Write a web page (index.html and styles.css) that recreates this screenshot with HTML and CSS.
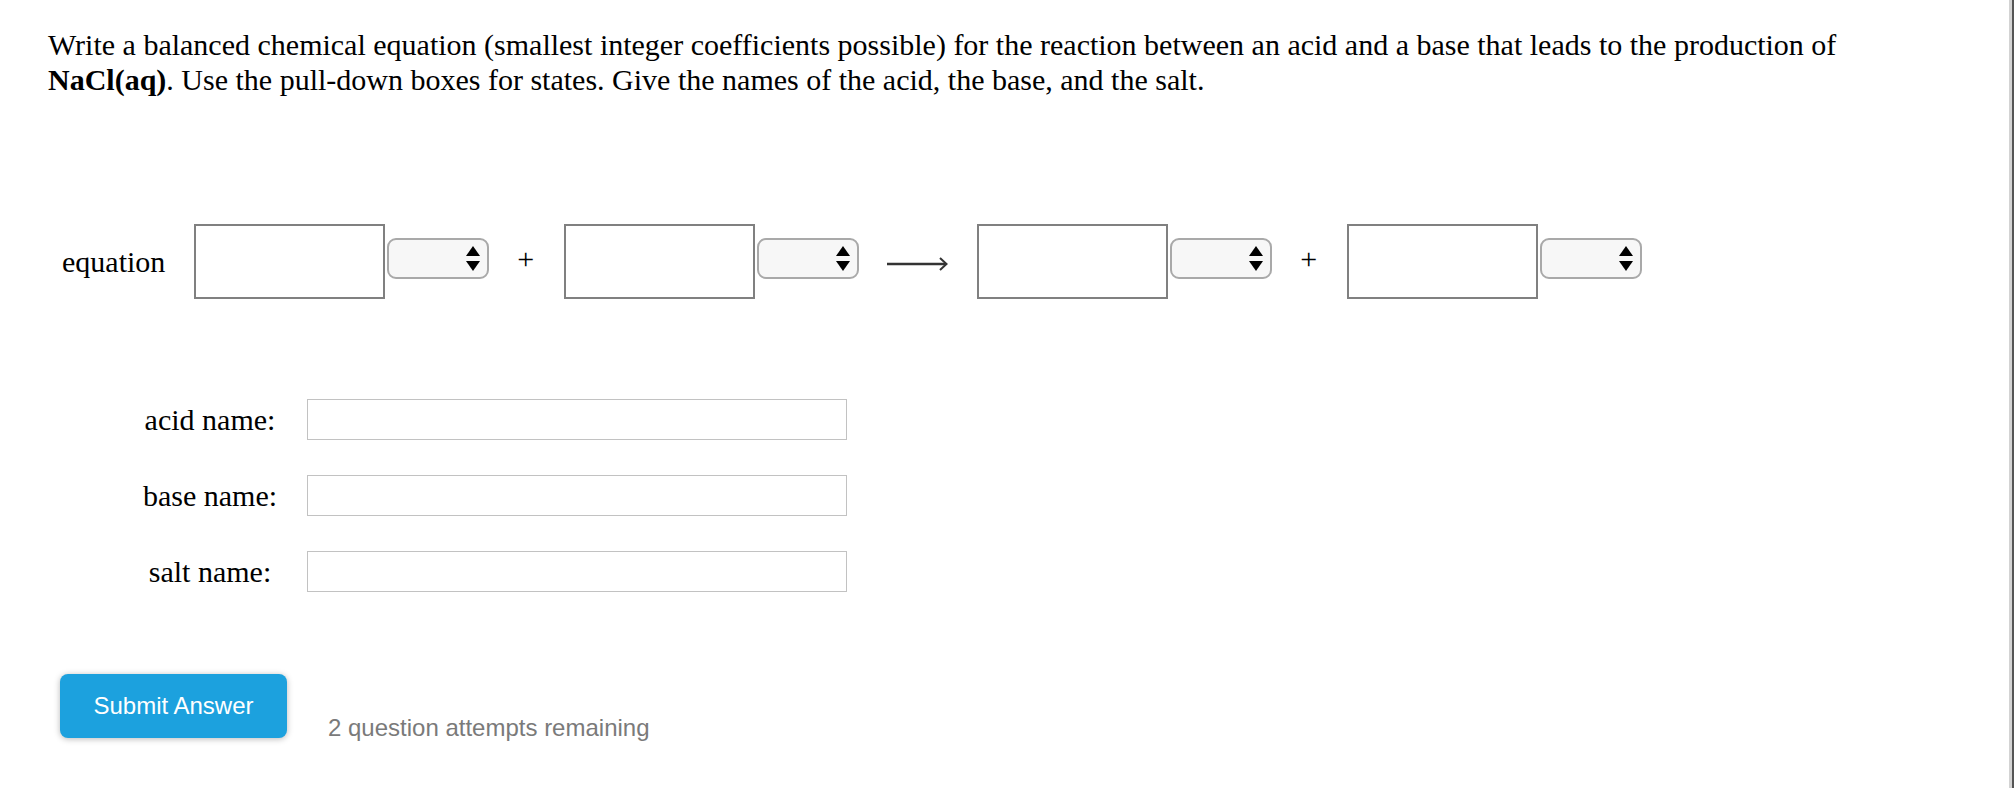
FILE: index.html
```html
<!DOCTYPE html>
<html lang="en">
<head>
<meta charset="utf-8">
<title>Question</title>
<link rel="stylesheet" href="styles.css">
</head>
<body>
<div class="frame">
  <p class="prompt">Write a balanced chemical equation (smallest integer coefficients possible) for the reaction between an acid and a base that leads to the production of <b>NaCl(aq)</b>. Use the pull-down boxes for states. Give the names of the acid, the base, and the salt.</p>

  <div class="equation-row">
    <span class="eq-label">equation</span>
    <div class="formula-box"></div>
    <div class="state-select"><svg class="updown" width="14" height="25" viewBox="0 0 14 25"><polygon points="7,0 14,10 0,10" fill="#000"/><polygon points="0,15 14,15 7,25" fill="#000"/></svg></div>
    <span class="op">+</span>
    <div class="formula-box"></div>
    <div class="state-select"><svg class="updown" width="14" height="25" viewBox="0 0 14 25"><polygon points="7,0 14,10 0,10" fill="#000"/><polygon points="0,15 14,15 7,25" fill="#000"/></svg></div>
    <svg class="yields" width="61" height="14" viewBox="0 0 61 14"><line x1="0" y1="7" x2="59" y2="7" stroke="#333" stroke-width="2.6"/><polyline points="53,1 59.5,7 53,13" fill="none" stroke="#333" stroke-width="2"/></svg>
    <div class="formula-box"></div>
    <div class="state-select"><svg class="updown" width="14" height="25" viewBox="0 0 14 25"><polygon points="7,0 14,10 0,10" fill="#000"/><polygon points="0,15 14,15 7,25" fill="#000"/></svg></div>
    <span class="op">+</span>
    <div class="formula-box"></div>
    <div class="state-select"><svg class="updown" width="14" height="25" viewBox="0 0 14 25"><polygon points="7,0 14,10 0,10" fill="#000"/><polygon points="0,15 14,15 7,25" fill="#000"/></svg></div>
  </div>

  <div class="names">
    <span class="name-label">acid name:</span>
    <div class="name-box"></div>
    <span class="name-label">base name:</span>
    <div class="name-box"></div>
    <span class="name-label">salt name:</span>
    <div class="name-box"></div>
  </div>

  <div class="submit-row">
    <button class="submit-btn" type="button">Submit Answer</button>
    <span class="attempts">2 question attempts remaining</span>
  </div>
</div>
</body>
</html>
```

FILE: styles.css
```css
html, body {
  margin: 0;
  padding: 0;
  background: #ffffff;
}

.frame {
  box-sizing: border-box;
  min-height: 100vh;
  border-right: 2px solid #555555;
  box-shadow: inset -3px 0 0 #d3d3d3;
  font-family: "Liberation Serif", "Times New Roman", serif;
  font-size: 30px;
  color: #000000;
  padding-top: 28px;
  overflow: hidden;
}

.prompt {
  margin: 0 0 0 48px;
  width: 1900px;
  line-height: 34.5px;
}

.prompt b {
  font-weight: bold;
}

.equation-row {
  display: flex;
  align-items: center;
  margin-top: 127px;
  padding-left: 62px;
  height: 75px;
}

.eq-label {
  margin-right: 29px;
  line-height: 34px;
}

.formula-box {
  box-sizing: border-box;
  width: 191px;
  height: 75px;
  border: 2px solid #808080;
  background: #ffffff;
}

.state-select {
  box-sizing: border-box;
  width: 102px;
  height: 41px;
  margin-left: 2px;
  margin-top: -6px;
  border: 2px solid #a9a9a9;
  border-radius: 9px;
  background: #f7f7f7;
  display: flex;
  align-items: center;
  justify-content: flex-end;
  padding-right: 7px;
}

.updown {
  display: block;
}

.op {
  margin: 0 30px 5px 28px;
  line-height: 34px;
}

.yields {
  display: block;
  margin: 5px 29px 0 28px;
}

.names {
  display: grid;
  grid-template-columns: 154px 540px;
  column-gap: 20px;
  row-gap: 35px;
  align-items: center;
  margin-top: 100px;
  margin-left: 133px;
}

.name-label {
  text-align: center;
  white-space: nowrap;
  line-height: 34px;
}

.name-box {
  box-sizing: border-box;
  height: 41px;
  border: 1px solid #c2c2c2;
  background: #ffffff;
}

.submit-row {
  display: flex;
  align-items: flex-start;
  margin-top: 82px;
  margin-left: 60px;
}

.submit-btn {
  height: 64px;
  width: 227px;
  padding: 0;
  border: none;
  border-radius: 8px;
  background: #1ca1de;
  color: #ffffff;
  font-family: "Liberation Sans", Arial, sans-serif;
  font-size: 24px;
  box-shadow: 0 1px 6px rgba(0, 0, 0, 0.28);
  cursor: pointer;
}

.attempts {
  margin-left: 41px;
  margin-top: 40px;
  font-family: "Liberation Sans", Arial, sans-serif;
  font-size: 24px;
  line-height: 28px;
  color: #7a7a7a;
}
```
